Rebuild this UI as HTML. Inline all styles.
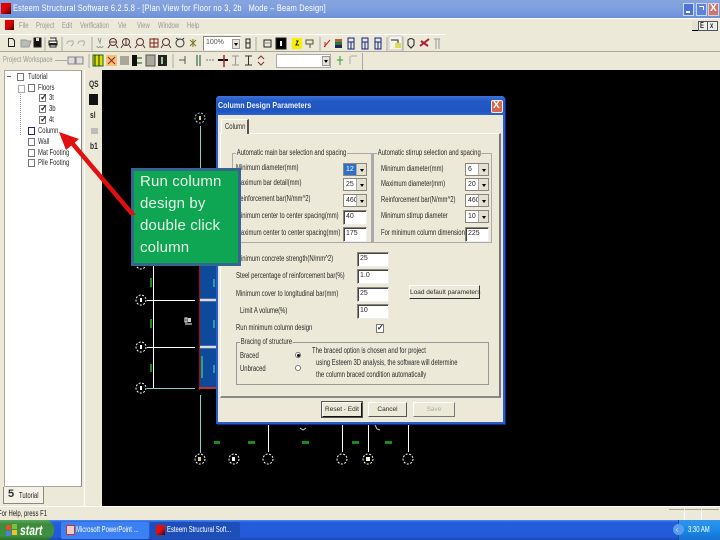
<!DOCTYPE html>
<html><head><meta charset="utf-8"><style>
*{box-sizing:border-box}
html,body{margin:0;padding:0;background:#000}
#p{position:relative;width:720px;height:540px;overflow:hidden;background:#ECE9D8;font-family:"Liberation Sans",sans-serif;font-size:8px;color:#2a2a2a}
.a,.t,.i,.s,.c{position:absolute}
.t{white-space:nowrap;line-height:10px;filter:blur(.35px);transform-origin:left top;transform:scaleX(.74)}
.i{background:#fff;border:1px solid #8a8778;border-right-color:#eee;border-bottom-color:#eee;box-shadow:inset 1px 1px 0 #444;font-size:7px;line-height:12px;padding-left:2px;filter:blur(.25px)}
.c{background:#fff;border:1px solid #8a8778;font-size:7px;line-height:11px;padding-left:2px;filter:blur(.2px)}
.c:after{content:"";position:absolute;right:0;top:0;bottom:0;width:9px;background:#e4e1d2;border-left:1px solid #aaa}
.c:before{content:"";position:absolute;z-index:1;right:2px;top:5px;border:2.5px solid transparent;border-top:3px solid #000;border-bottom:0}
.b{position:absolute;background:#ECE9D8;border:1px solid;border-color:#fff #333 #333 #fff;text-align:center;font-size:6.5px;line-height:13px;white-space:nowrap;filter:blur(.25px)}
.k{position:absolute;width:7px;height:8px;background:#fff;border:1px solid #777}
</style></head><body><div id="p">

<!-- title bar -->
<div class="a" style="left:0;top:0;width:720px;height:18px;background:linear-gradient(#86a4dd,#7e9fdf 50%,#6d90d8)"></div>
<div class="a" style="left:1px;top:3px;width:10px;height:11px;background:linear-gradient(135deg,#d00 50%,#400)"></div>
<div class="t" style="left:13px;top:3px;color:#fff;font-size:9.5px;line-height:12px;letter-spacing:.27px;transform:scaleX(.78)">Esteem Structural Software 6.2.5.8 - [Plan View for Floor no 3, 2b&nbsp;&nbsp; Mode – Beam Design]</div>
<div class="a" style="left:683px;top:3px;width:11px;height:13px;background:#4f74d8;border:1px solid #cdd8f5"></div>
<div class="a" style="left:686px;top:11px;width:4px;height:2px;background:#fff"></div>
<div class="a" style="left:696px;top:3px;width:11px;height:13px;background:#5e83dc;border:1px solid #cdd8f5"></div>
<div class="a" style="left:699px;top:6px;width:5px;height:4px;border:1px solid #fff;border-left:0;border-bottom:0"></div>
<div class="a" style="left:708px;top:3px;width:11px;height:13px;background:#c9776f;border:1px solid #dcd0d8"></div>
<div class="t" style="left:710px;top:4px;color:#fff;font-size:10px;font-weight:bold;transform:none">X</div>

<!-- menu -->
<div class="a" style="left:0;top:18px;width:720px;height:1px;background:#fff"></div>
<div class="a" style="left:5px;top:20px;width:9px;height:10px;background:linear-gradient(135deg,#d00 50%,#300)"></div>
<div class="t" style="left:19px;top:21px;color:#999">File</div>
<div class="t" style="left:36px;top:21px;color:#999">Project</div>
<div class="t" style="left:62px;top:21px;color:#999">Edit</div>
<div class="t" style="left:80px;top:21px;color:#999">Verification</div>
<div class="t" style="left:118px;top:21px;color:#999">Vie</div>
<div class="t" style="left:137px;top:21px;color:#999">View</div>
<div class="t" style="left:158px;top:21px;color:#999">Window</div>
<div class="t" style="left:187px;top:21px;color:#999">Help</div>
<div class="a" style="left:692px;top:21px;width:6px;height:10px;border-bottom:1px solid #000;background:#e4e1d2"></div>
<div class="a" style="left:698px;top:21px;width:10px;height:10px;border:1px solid #555;background:#eee"></div>
<div class="t" style="left:700px;top:21px;font-weight:bold">E</div>
<div class="a" style="left:707px;top:21px;width:11px;height:10px;border:1px solid #555;background:#eee"></div>
<div class="t" style="left:710px;top:21px;font-weight:bold">x</div>

<!-- toolbars -->
<div class="a" style="left:0;top:51px;width:720px;height:1px;background:#aca899"></div>
<div class="a" style="left:0;top:34px;width:445px;height:1px;background:#fff"></div>
<svg class="a" style="left:0;top:32px;filter:blur(.35px)" width="720" height="38" viewBox="0 32 720 38">
<g fill="none" stroke="#222" stroke-width="1">
<path d="M8.500 38.500h4l2 2v6h-6z"/>
<path d="M21 40h5l1 1h4l-2 6h-8z" fill="#bbb" stroke="#999"/>
<rect x="34" y="38" width="7" height="9" fill="#111"/><rect x="36" y="38" width="3" height="3" fill="#ddd" stroke="none"/>
<path d="M45 37v15" stroke="#aaa"/>
<path d="M49 41h8v4h-8zM50 38h6v3M50 45v2h6v-2" fill="#fff"/><path d="M49 44h8" stroke-width="2"/>
<path d="M62 37v15" stroke="#aaa"/>
<path d="M67 44q0-3 3-3h3q1 3-2 5M78 44q0-3 3-3h3q1 3-1 5" stroke="#aaa"/>
<path d="M92 37v15" stroke="#aaa"/>
<path d="M98 38l2 5 1-5M97 46a1.500 1.500 0 1 0 3 0M100 46a1.500 1.500 0 1 0 3 0" stroke="#999"/>
<g stroke="#533"><circle cx="113" cy="42" r="3.500"/><path d="M110 45l-2 3M116 45l2 3M110 42h6"/>
<circle cx="126" cy="42" r="3.500"/><path d="M123 45l-2 3M129 45l2 3M126 39v6"/>
<circle cx="140" cy="42" r="3.500"/><path d="M137 45l-2 3M143 45l2 3"/>
<path d="M150 39h8v8h-8zM154 38v10M150 43h8" stroke="#722"/>
<circle cx="166" cy="42" r="3.500"/><path d="M163 45l-2 3M169 45l2 3"/>
<circle cx="180" cy="43" r="4" stroke="#333"/><path d="M176 38l3 2M184 38l-2 2" stroke="#333"/>
<path d="M190 40l6 6M196 40l-6 6M193 39v8" stroke="#772"/></g>
<path d="M246 39h4v9h-4zM246 43h4"/>
<path d="M256 37v15" stroke="#aaa"/>
<rect x="264" y="40" width="7" height="7"/><path d="M264 43h7" stroke="#888"/>
<rect x="276" y="38" width="10" height="11" fill="#000"/><rect x="280" y="41" width="2" height="5" fill="#fff" stroke="none"/>
<rect x="292" y="38" width="10" height="11" fill="#f4f000" stroke="none"/><path d="M296 41h2l-2 4h3"/>
<path d="M306 40h7v4h-7zM310 44v4" stroke="#553"/>
<path d="M320 37v15" stroke="#aaa"/>
<path d="M324 47l6-7M325 42v5" stroke="#c22"/>
<rect x="335" y="39" width="7" height="3" fill="#a63" stroke="none"/><rect x="335" y="42" width="7" height="3" fill="#274" stroke="none"/><rect x="335" y="45" width="7" height="3" fill="#225" stroke="none"/>
<g stroke="#128"><path d="M348 38h6v11h-6zM348 42h6M351 42v7"/><path d="M362 38h6v11h-6zM362 42h6M365 42v7"/><path d="M375 38h6v11h-6zM375 42h6M378 42v7"/></g>
<path d="M387 37v15" stroke="#aaa"/>
<rect x="389" y="36" width="13" height="14" fill="#f6f4ea" stroke="#ccc"/><path d="M391 40h7v8"/><rect x="395" y="43" width="6" height="5" fill="#dd5" stroke="none"/>
<path d="M403 37v15" stroke="#aaa"/>
<path d="M408 40q3-3 6 0v5l-3 3-3-3z"/>
<path d="M420 46l9-7M421 41l7 5" stroke="#a23" stroke-width="2"/>
<path d="M434 39h6M436 39v10M439 39v10" stroke="#999"/>
<!-- row 2 -->
<path d="M55 60.500h12" stroke="#aaa"/>
<rect x="68" y="57" width="7" height="7" fill="#ddd" stroke="#888"/><rect x="76" y="57" width="7" height="7" fill="#ddd" stroke="#888"/>
<path d="M89 54v14" stroke="#aaa"/>
<rect x="93" y="55" width="10" height="11" fill="#dd0" stroke="#262"/><path d="M95 55v11M99 55v11" stroke="#131"/>
<rect x="106" y="55" width="11" height="11" fill="#f5c27a" stroke="none"/><path d="M108 57l7 7M115 57l-7 7" stroke="#922"/>
<rect x="120" y="56" width="9" height="9" fill="#a9a79a" stroke="none"/>
<rect x="132" y="55" width="5" height="11" fill="#111" stroke="none"/><path d="M137 58h5M137 63h5" stroke="#151"/>
<rect x="146" y="55" width="9" height="11" fill="#aaa69a" stroke="#555"/>
<rect x="158" y="55" width="9" height="11" fill="#222" stroke="none"/><rect x="161" y="57" width="2" height="7" fill="#9c9" stroke="none"/>
<path d="M173 54v14" stroke="#aaa"/>
<path d="M179 60h6M185 56v8" stroke="#555"/>
<path d="M197 55v11M200 55v11" stroke="#153"/>
<path d="M206 60h9" stroke="#777" stroke-dasharray="2 1"/>
<path d="M218 60h10" stroke="#111" stroke-width="2"/><path d="M224 55v12" stroke="#a22" stroke-width="1.500"/>
<path d="M232 56h7M232 65h7M235.500 56v9" stroke="#999"/>
<path d="M245 56h7M245 65h7M248.500 56v9" stroke="#333"/>
<path d="M258 59l3-3 3 3M258 62l3 3 3-3" stroke="#733"/>
<path d="M337 60h6M340 56v9" stroke="#393"/><path d="M351 56h6M350 56v8" stroke="#aaa"/>
</g>
</svg>
<div class="i" style="left:203px;top:36px;width:38px;height:15px;box-shadow:none;background:#fff;color:#555">100%</div>
<div class="a" style="left:232px;top:39px;width:8px;height:10px;background:#e8e5d6;border:1px solid #999"></div>
<div class="a" style="left:234px;top:43px;border:2px solid transparent;border-top:3px solid #000"></div>
<div class="t" style="left:3px;top:55px;color:#999">Project Workspace</div>
<div class="a" style="left:276px;top:54px;width:55px;height:14px;background:#fff;border:1px solid #aaa"></div>
<div class="a" style="left:322px;top:56px;width:8px;height:10px;background:#e8e5d6;border:1px solid #999"></div>
<div class="a" style="left:324px;top:60px;border:2px solid transparent;border-top:3px solid #000"></div>
<div class="a" style="left:362px;top:53px;width:1px;height:17px;background:#aca899"></div>

<!-- left panel -->
<div class="a" style="left:4px;top:70px;width:78px;height:417px;background:#fff;border:1px solid #aca899;border-right-color:#888"></div>
<div class="a" style="left:84px;top:70px;width:1px;height:436px;background:#fff"></div>
<div class="a" style="left:3px;top:487px;width:41px;height:17px;background:#f4f2e6;border:1px solid #888;border-top:0"></div>
<div class="t" style="left:8px;top:488px;font-size:11px;line-height:13px;font-weight:bold;color:#333;transform:none">5</div>
<div class="t" style="left:19px;top:491px;color:#222">Tutorial</div>
<div class="a" style="left:7px;top:76px;width:4px;height:1px;background:#666"></div>
<div class="a" style="left:20px;top:85px;height:50px;border-left:1px dotted #999"></div>
<div class="k" style="left:17px;top:73px"></div><div class="t" style="left:28px;top:72px">Tutorial</div>
<div class="k" style="left:18px;top:85px;border-color:#aaa"></div>
<div class="k" style="left:28px;top:84px"></div><div class="t" style="left:38px;top:83px">Floors</div>
<div class="k" style="left:39px;top:94px"></div><div class="t" style="left:40px;top:92px;font-weight:bold;font-size:9px;transform:none">✓</div><div class="t" style="left:49px;top:93px">3t</div>
<div class="k" style="left:39px;top:105px"></div><div class="t" style="left:40px;top:103px;font-weight:bold;font-size:9px;transform:none">✓</div><div class="t" style="left:49px;top:104px">3b</div>
<div class="k" style="left:39px;top:116px"></div><div class="t" style="left:40px;top:114px;font-weight:bold;font-size:9px;transform:none">✓</div><div class="t" style="left:49px;top:115px">4t</div>
<div class="k" style="left:28px;top:127px;border-color:#227"></div><div class="t" style="left:38px;top:126px">Column</div>
<div class="k" style="left:28px;top:138px"></div><div class="t" style="left:38px;top:137px">Wall</div>
<div class="k" style="left:28px;top:149px"></div><div class="t" style="left:38px;top:148px">Mat Footing</div>
<div class="k" style="left:28px;top:159px"></div><div class="t" style="left:38px;top:158px">Pile Footing</div>
<div class="t" style="left:89px;top:79px;font-weight:bold;font-size:9px">QS</div>
<div class="a" style="left:89px;top:94px;width:9px;height:11px;background:#111"></div>
<div class="t" style="left:90px;top:110px;font-weight:bold;font-size:9px">sl</div>
<div class="a" style="left:91px;top:128px;width:7px;height:6px;background:#bbb"></div>
<div class="t" style="left:90px;top:141px;font-weight:bold;font-size:9px">b1</div>

<!-- canvas -->
<div class="a" style="left:102px;top:70px;width:618px;height:436px;background:#000"></div>
<svg class="a" style="left:102px;top:70px" width="618" height="436" viewBox="102 70 618 436">
<path d="M200.500 126V190M200.500 395V453" stroke="#8cc" fill="none"/>
<g fill="none" stroke="#fff" stroke-dasharray="2 1.500">
<circle cx="200" cy="118" r="5" stroke="#9cc"/><circle cx="141" cy="300" r="5"/><circle cx="141" cy="347" r="5"/><circle cx="141" cy="388" r="5"/>
<circle cx="200" cy="459" r="5"/><circle cx="234" cy="459" r="5"/><circle cx="268" cy="459" r="5"/><circle cx="342" cy="459" r="5"/><circle cx="368" cy="459" r="5"/><circle cx="408" cy="459" r="5"/><circle cx="141" cy="264" r="5"/>
</g>
<g fill="#fff"><rect x="199" y="116" width="2" height="4" fill="#dc8"/><rect x="198" y="457" width="3" height="4" fill="#dc8"/><rect x="232" y="457" width="3" height="4"/><rect x="366" y="457" width="4" height="4" fill="#ffc"/><rect x="140" y="298" width="2" height="4"/><rect x="140" y="345" width="2" height="4"/><rect x="140" y="386" width="2" height="4"/></g>
<rect x="199" y="266" width="18" height="122" fill="#0d4a9c"/>
<path d="M199.500 266V390" stroke="#8b1a1a" stroke-width="1.500"/>
<path d="M200 300h17M200 347h17" stroke="#ddd" stroke-width="2.500"/>
<path d="M199 388h18" stroke="#b33" stroke-width="2"/>
<path d="M147 300.500H195M147 347.500H195M153.500 265V388" stroke="#fff"/>
<path d="M147 388.500H195" stroke="#8cc"/>
<path d="M268.500 425V452M342.500 425V452M368.500 425V452M408.500 425V452" stroke="#fff"/>
<path d="M300 428l3 2 3-2M375 425l2 4 3 1" stroke="#ccc" fill="none"/>
<g fill="#1a8a1a"><rect x="150" y="278" width="2" height="9"/><rect x="150" y="319" width="2" height="9"/><rect x="150" y="364" width="2" height="8"/><rect x="214" y="441" width="6" height="3"/><rect x="248" y="441" width="7" height="3"/><rect x="302" y="441" width="7" height="3"/><rect x="352" y="441" width="7" height="3"/><rect x="385" y="441" width="7" height="3"/></g>
<g fill="#2b9ab0"><rect x="213" y="279" width="2" height="8"/><rect x="213" y="320" width="2" height="8"/><rect x="213" y="365" width="2" height="8"/><rect x="201" y="356" width="2" height="22" fill="#3a9a7a"/></g>
<path d="M185 322v-4h2v4zM185 324h7" stroke="#fff"/><rect x="188" y="318" width="3" height="4" fill="#ccc"/>
</svg>

<!-- dialog -->
<div class="a" style="left:216px;top:96px;width:289px;height:328px;background:#ECE9D8;border:2px solid #2a5cc8;border-top:0;border-radius:3px 3px 0 0;box-shadow:1px 1px 0 #0a2a8c"></div>
<div class="a" style="left:216px;top:96px;width:289px;height:19px;background:linear-gradient(#3c72d8,#2258c4 30%,#1f55c0 80%,#2a64d0);border-radius:4px 4px 0 0"></div>
<div class="t" style="left:218px;top:100px;color:#eef;font-weight:bold;font-size:8.500px;line-height:11px;transform:scaleX(.84)">Column Design Parameters</div>
<div class="a" style="left:491px;top:100px;width:12px;height:13px;background:#d8694c;border:1px solid #eee;border-radius:2px"></div>
<div class="t" style="left:493px;top:101px;color:#fff;font-size:10px;font-weight:bold;transform:none">X</div>
<div class="a" style="left:220px;top:133px;width:281px;height:265px;border:1px solid #fff;border-right:2px solid #777;border-bottom:2px solid #888"></div>
<div class="a" style="left:221px;top:119px;width:28px;height:15px;background:#ECE9D8;border:1px solid #fff;border-right:2px solid #555;border-bottom:0"></div>
<div class="t" style="left:225px;top:122px">Column</div>

<div class="a" style="left:232px;top:153px;width:140px;height:90px;border:1px solid #aaa"></div>
<div class="a" style="left:372px;top:153px;width:120px;height:90px;border:1px solid #aaa;border-left:2px solid #aaa"></div>
<div class="t" style="left:236px;top:148px;background:#ECE9D8;padding:0 1px">Automatic main bar selection and spacing</div>
<div class="t" style="left:377px;top:148px;background:#ECE9D8;padding:0 1px">Automatic stirrup selection and spacing</div>

<div class="t" style="left:236px;top:163px">Minimum diameter(mm)</div>
<div class="t" style="left:236px;top:178px">Maximum bar detail(mm)</div>
<div class="t" style="left:236px;top:194px">Reinforcement bar(N/mm^2)</div>
<div class="t" style="left:236px;top:211px">Minimum center to center spacing(mm)</div>
<div class="t" style="left:236px;top:228px">Maximum center to center spacing(mm)</div>
<div class="c" style="left:343px;top:163px;width:24px;height:13px;background:#2f6fc6;color:#fff">12</div>
<div class="c" style="left:343px;top:178px;width:24px;height:13px">25</div>
<div class="c" style="left:343px;top:194px;width:24px;height:13px">460</div>
<div class="i" style="left:343px;top:210px;width:24px;height:15px">40</div>
<div class="i" style="left:343px;top:227px;width:24px;height:15px">175</div>

<div class="t" style="left:381px;top:164px">Minimum diameter(mm)</div>
<div class="t" style="left:381px;top:179px">Maximum diameter(mm)</div>
<div class="t" style="left:381px;top:195px">Reinforcement bar(N/mm^2)</div>
<div class="t" style="left:381px;top:211px">Minimum stirrup diameter</div>
<div class="t" style="left:381px;top:228px">For minimum column dimension</div>
<div class="c" style="left:465px;top:163px;width:24px;height:13px">6</div>
<div class="c" style="left:465px;top:178px;width:24px;height:13px">20</div>
<div class="c" style="left:465px;top:194px;width:24px;height:13px">460</div>
<div class="c" style="left:465px;top:210px;width:24px;height:13px">10</div>
<div class="i" style="left:465px;top:227px;width:24px;height:15px">225</div>

<div class="t" style="left:236px;top:254px">Minimum concrete strength(N/mm^2)</div>
<div class="t" style="left:236px;top:271px">Steel percentage of reinforcement bar(%)</div>
<div class="t" style="left:236px;top:289px">Minimum cover to longitudinal bar(mm)</div>
<div class="t" style="left:240px;top:306px">Limit A volume(%)</div>
<div class="t" style="left:236px;top:323px">Run minimum column design</div>
<div class="i" style="left:357px;top:252px;width:32px;height:15px">25</div>
<div class="i" style="left:357px;top:269px;width:32px;height:15px">1.0</div>
<div class="i" style="left:357px;top:287px;width:32px;height:15px">25</div>
<div class="i" style="left:357px;top:304px;width:32px;height:15px">10</div>
<div class="k" style="left:376px;top:324px;width:8px;height:9px"></div>
<div class="t" style="left:377px;top:323px;font-weight:bold;transform:none">✓</div>
<div class="b" style="left:409px;top:285px;width:71px;height:14px">Load default parameters</div>

<div class="a" style="left:236px;top:342px;width:253px;height:43px;border:1px solid #999"></div>
<div class="t" style="left:240px;top:337px;background:#ECE9D8;padding:0 1px">Bracing of structure</div>
<div class="t" style="left:240px;top:351px">Braced</div>
<div class="t" style="left:240px;top:364px">Unbraced</div>
<div class="a" style="left:295px;top:352px;width:6px;height:6px;border-radius:50%;background:#fff;border:1px solid #777"></div>
<div class="a" style="left:297px;top:354px;width:3px;height:3px;border-radius:50%;background:#111"></div>
<div class="a" style="left:295px;top:365px;width:6px;height:6px;border-radius:50%;background:#fff;border:1px solid #777"></div>
<div class="t" style="left:312px;top:346px">The braced option is chosen and for project</div>
<div class="t" style="left:316px;top:358px">using Esteem 3D analysis, the software will determine</div>
<div class="t" style="left:316px;top:370px">the column braced condition automatically</div>

<div class="b" style="left:322px;top:402px;width:40px;height:15px;background:#ECE9D8;border-color:#fff #111 #111 #fff;box-shadow:0 0 0 1px #555">Reset - Edit</div>
<div class="b" style="left:368px;top:402px;width:39px;height:15px;border-color:#fff #555 #555 #fff">Cancel</div>
<div class="b" style="left:413px;top:402px;width:42px;height:15px;border-color:#fff #777 #777 #fff;color:#aaa">Save</div>

<!-- callout -->
<div class="a" style="left:131px;top:168px;width:110px;height:98px;background:#0EA553;border:3px solid #35668f"></div>
<div class="t" style="left:140px;top:171px;color:#e8f5e8;font-size:15px;line-height:22px;filter:none;letter-spacing:.15px;transform:none">Run column<br>design by<br>double click<br>column</div>
<svg class="a" style="left:55px;top:125px" width="85" height="90" viewBox="55 125 85 90"><path d="M134 216L72 143" stroke="#e01010" stroke-width="4.500"/><path d="M59 132L79 139 66 150z" fill="#e01010"/></svg>

<!-- status -->
<div class="a" style="left:0;top:506px;width:720px;height:1px;background:#fff"></div>
<div class="t" style="left:-2px;top:509px;color:#222">For Help, press F1</div>
<div class="a" style="left:669px;top:509px;width:50px;height:1px;background:#aca899"></div>
<div class="a" style="left:684px;top:507px;width:1px;height:13px;background:#fff"></div>
<div class="a" style="left:701px;top:507px;width:1px;height:13px;background:#fff"></div>

<!-- taskbar -->
<div class="a" style="left:0;top:520px;width:720px;height:20px;background:linear-gradient(#4c8cf0,#245ddb 12%,#2459d8 85%,#1a45b0)"></div>
<div class="a" style="left:0;top:520px;width:54px;height:20px;background:linear-gradient(#5aa85a,#3c8c3c 20%,#3f9140 80%,#2c6e2c);border-radius:0 9px 9px 0"></div>
<div class="a" style="left:6px;top:525px;width:5px;height:5px;background:#e05030"></div>
<div class="a" style="left:12px;top:524px;width:5px;height:5px;background:#7cc040"></div>
<div class="a" style="left:6px;top:531px;width:5px;height:5px;background:#4a80e0"></div>
<div class="a" style="left:12px;top:530px;width:5px;height:5px;background:#f0c030"></div>
<div class="t" style="left:20px;top:523px;color:#fff;font-size:14px;line-height:15px;font-weight:bold;font-style:italic">start</div>
<div class="a" style="left:61px;top:522px;width:88px;height:17px;background:#3c81f3;border-radius:2px"></div>
<div class="a" style="left:66px;top:525px;width:9px;height:10px;background:#e8d0c8;border:1px solid #c33"></div>
<div class="t" style="left:76px;top:525px;color:#fff">Microsoft PowerPoint ...</div>
<div class="a" style="left:150px;top:522px;width:90px;height:17px;background:#1e4fb8;border-radius:2px"></div>
<div class="a" style="left:156px;top:525px;width:9px;height:10px;background:linear-gradient(135deg,#e01010 50%,#400)"></div>
<div class="t" style="left:167px;top:525px;color:#fff">Esteem Structural Soft...</div>
<div class="a" style="left:678px;top:520px;width:42px;height:20px;background:linear-gradient(#2f95ee,#1a8ae8 50%,#1470d0);border-left:1px solid #0f50a0"></div>
<div class="a" style="left:673px;top:524px;width:11px;height:11px;border-radius:50%;background:#5a9cf0"></div>
<div class="t" style="left:676px;top:525px;color:#fff">‹</div>
<div class="t" style="left:688px;top:525px;color:#fff">3:30 AM</div>

</div></body></html>
